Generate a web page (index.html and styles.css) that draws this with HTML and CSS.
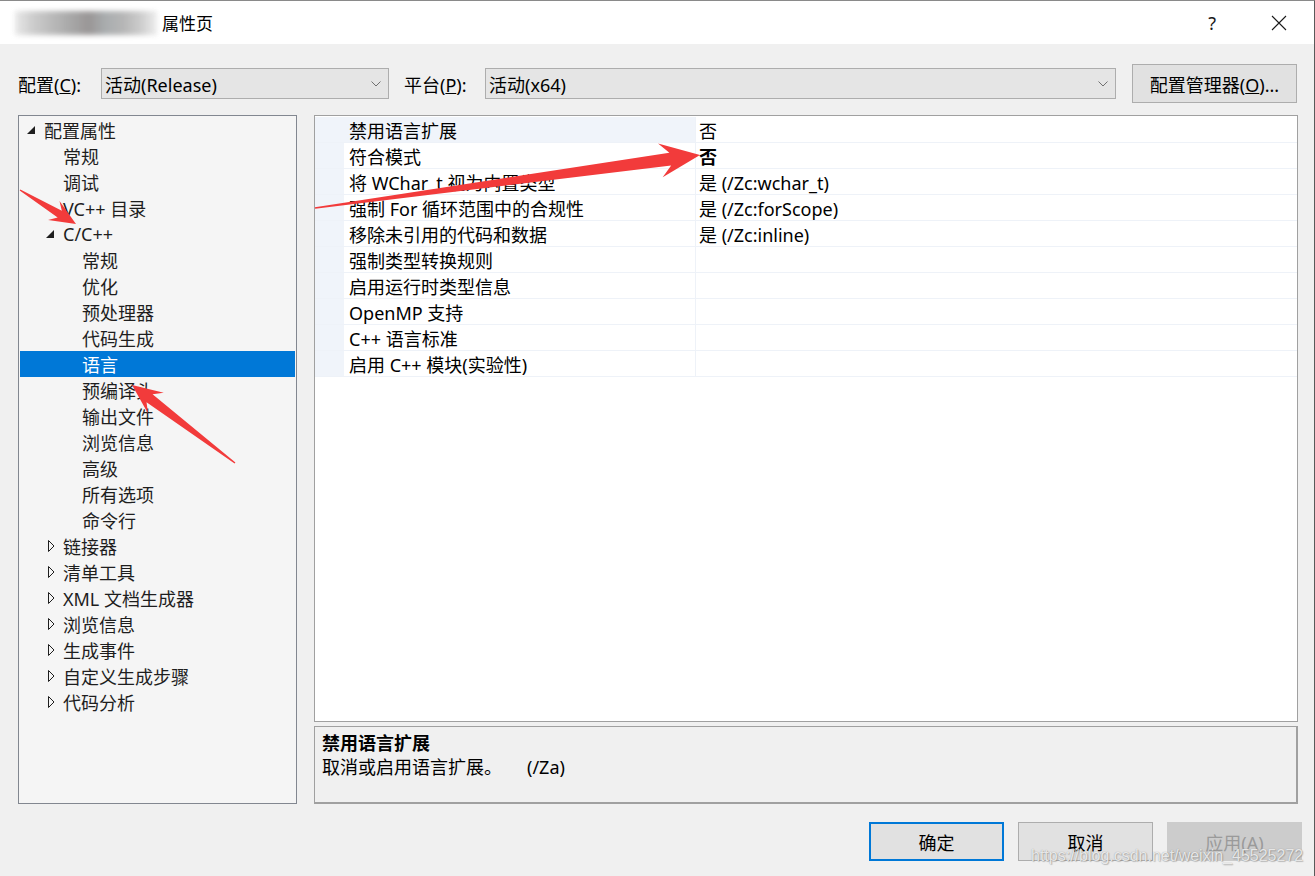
FILE: index.html
```html
<!DOCTYPE html>
<html lang="zh-CN">
<head>
<meta charset="utf-8">
<title>属性页</title>
<link rel="stylesheet" href="styles.css">
</head>
<body>
<div class="window">
  <div class="titlebar">
    <div class="blur"></div>
    <span class="title">属性页</span>
    <div class="title-btns">
      <span class="help">?</span>
      <span class="close"><svg width="16" height="16" viewBox="0 0 16 16"><path d="M1 1L15 15M15 1L1 15" stroke="#1a1a1a" stroke-width="1.1" fill="none"/></svg></span>
    </div>
  </div>

  <div class="config-row">
    <span class="lbl lbl-config">配置(<u>C</u>):</span>
    <div class="combo combo-config"><span>活动(Release)</span><svg class="chev" width="10" height="6" viewBox="0 0 10 6"><path d="M0.5 0.5L5 5L9.5 0.5" stroke="#707070" fill="none"/></svg></div>
    <span class="lbl lbl-platform">平台(<u>P</u>):</span>
    <div class="combo combo-platform"><span>活动(x64)</span><svg class="chev" width="10" height="6" viewBox="0 0 10 6"><path d="M0.5 0.5L5 5L9.5 0.5" stroke="#707070" fill="none"/></svg></div>
    <button class="btn btn-manager">配置管理器(<u>O</u>)...</button>
  </div>

  <div class="main">
    <div class="tree">
      <div class="trow lv0"><span class="tg"><svg width="8" height="8" viewBox="0 0 8 8"><path d="M8 0V8H0Z" fill="#1e1e1e"/></svg></span><span>配置属性</span></div>
      <div class="trow lv1"><span class="tg"></span><span>常规</span></div>
      <div class="trow lv1"><span class="tg"></span><span>调试</span></div>
      <div class="trow lv1"><span class="tg"></span><span>VC++ 目录</span></div>
      <div class="trow lv1"><span class="tg"><svg width="8" height="8" viewBox="0 0 8 8"><path d="M8 0V8H0Z" fill="#1e1e1e"/></svg></span><span>C/C++</span></div>
      <div class="trow lv2"><span class="tg"></span><span>常规</span></div>
      <div class="trow lv2"><span class="tg"></span><span>优化</span></div>
      <div class="trow lv2"><span class="tg"></span><span>预处理器</span></div>
      <div class="trow lv2"><span class="tg"></span><span>代码生成</span></div>
      <div class="trow lv2 selected"><span class="tg"></span><span>语言</span></div>
      <div class="trow lv2"><span class="tg"></span><span>预编译头</span></div>
      <div class="trow lv2"><span class="tg"></span><span>输出文件</span></div>
      <div class="trow lv2"><span class="tg"></span><span>浏览信息</span></div>
      <div class="trow lv2"><span class="tg"></span><span>高级</span></div>
      <div class="trow lv2"><span class="tg"></span><span>所有选项</span></div>
      <div class="trow lv2"><span class="tg"></span><span>命令行</span></div>
      <div class="trow lv1"><span class="tg col"><svg width="7" height="12" viewBox="0 0 7 12"><path d="M0.5 0.5L6 6L0.5 11.5Z" fill="none" stroke="#1e1e1e"/></svg></span><span>链接器</span></div>
      <div class="trow lv1"><span class="tg col"><svg width="7" height="12" viewBox="0 0 7 12"><path d="M0.5 0.5L6 6L0.5 11.5Z" fill="none" stroke="#1e1e1e"/></svg></span><span>清单工具</span></div>
      <div class="trow lv1"><span class="tg col"><svg width="7" height="12" viewBox="0 0 7 12"><path d="M0.5 0.5L6 6L0.5 11.5Z" fill="none" stroke="#1e1e1e"/></svg></span><span>XML 文档生成器</span></div>
      <div class="trow lv1"><span class="tg col"><svg width="7" height="12" viewBox="0 0 7 12"><path d="M0.5 0.5L6 6L0.5 11.5Z" fill="none" stroke="#1e1e1e"/></svg></span><span>浏览信息</span></div>
      <div class="trow lv1"><span class="tg col"><svg width="7" height="12" viewBox="0 0 7 12"><path d="M0.5 0.5L6 6L0.5 11.5Z" fill="none" stroke="#1e1e1e"/></svg></span><span>生成事件</span></div>
      <div class="trow lv1"><span class="tg col"><svg width="7" height="12" viewBox="0 0 7 12"><path d="M0.5 0.5L6 6L0.5 11.5Z" fill="none" stroke="#1e1e1e"/></svg></span><span>自定义生成步骤</span></div>
      <div class="trow lv1"><span class="tg col"><svg width="7" height="12" viewBox="0 0 7 12"><path d="M0.5 0.5L6 6L0.5 11.5Z" fill="none" stroke="#1e1e1e"/></svg></span><span>代码分析</span></div>
    </div>

    <div class="right">
      <div class="grid">
        <div class="grow active"><span class="gut"></span><span class="name">禁用语言扩展</span><span class="val">否</span></div>
        <div class="grow"><span class="gut"></span><span class="name">符合模式</span><span class="val bold">否</span></div>
        <div class="grow"><span class="gut"></span><span class="name">将 WChar_t 视为内置类型</span><span class="val">是 (/Zc:wchar_t)</span></div>
        <div class="grow"><span class="gut"></span><span class="name">强制 For 循环范围中的合规性</span><span class="val">是 (/Zc:forScope)</span></div>
        <div class="grow"><span class="gut"></span><span class="name">移除未引用的代码和数据</span><span class="val">是 (/Zc:inline)</span></div>
        <div class="grow"><span class="gut"></span><span class="name">强制类型转换规则</span><span class="val"></span></div>
        <div class="grow"><span class="gut"></span><span class="name">启用运行时类型信息</span><span class="val"></span></div>
        <div class="grow"><span class="gut"></span><span class="name">OpenMP 支持</span><span class="val"></span></div>
        <div class="grow"><span class="gut"></span><span class="name">C++ 语言标准</span><span class="val"></span></div>
        <div class="grow"><span class="gut"></span><span class="name">启用 C++ 模块(实验性)</span><span class="val"></span></div>
      </div>
      <div class="desc">
        <div class="desc-title">禁用语言扩展</div>
        <div class="desc-text">取消或启用语言扩展。<span class="flag">(/Za)</span></div>
      </div>
    </div>
  </div>

  <div class="buttons">
    <button class="btn dlg default">确定</button>
    <button class="btn dlg">取消</button>
    <button class="btn dlg disabled">应用(A)</button>
  </div>

  <div class="watermark">https://blog.csdn.net/weixin_45525272</div>

  <svg class="arrows" width="1315" height="876" viewBox="0 0 1315 876">
    <polygon points="315.11,207.79 671.17,164.53 662.69,176.30 700,154 658.05,142.62 669.39,151.65 314.89,206.21" fill="#f23b3b"/>
    <polygon points="19.69,189.51 57.68,216.56 48.07,218.91 76,223 59.49,200.11 61.84,209.72 20.31,188.49" fill="#f23b3b"/>
    <polygon points="235.42,461.44 152.56,393.29 163.77,391.75 132,384 148.07,412.47 146.52,401.27 234.58,462.56" fill="#f23b3b"/>
  </svg>
</div>
</body>
</html>
```

FILE: styles.css
```css
* { box-sizing: border-box; }

html, body {
  margin: 0;
  padding: 0;
  background: #f0f0f0;
}

body {
  font-family: "Noto Sans", "Noto Sans CJK SC", sans-serif;
  font-size: 18px;
  color: #000;
}

.window {
  position: relative;
  width: 1315px;
  height: 876px;
  background: #f0f0f0;
  border-top: 1px solid #8a8a8a;
  border-right: 1px solid #5a5a5a;
  overflow: hidden;
}

/* Title bar */
.titlebar {
  height: 43px;
  background: #fff;
  display: flex;
  align-items: center;
  position: relative;
}

.blur {
  width: 142px;
  height: 24px;
  margin-left: 15px;
  background: linear-gradient(90deg, #e6e6e6 0%, #c9c9c9 12%, #b4b4b4 25%, #9e9e9e 40%, #8f8b8b 52%, #a1a5a7 64%, #aeaeae 76%, #c6c6c6 88%, #ececec 100%);
  filter: blur(2.5px);
  opacity: 0.9;
}

.title {
  margin-left: 5px;
  font-size: 17px;
  color: #000;
}

.title-btns {
  margin-left: auto;
  display: flex;
  align-items: center;
  gap: 55px;
  padding-right: 27px;
}

.help {
  font-size: 18px;
  color: #1a1a1a;
  font-family: "Noto Sans", sans-serif;
}

.close {
  display: flex;
  width: 16px;
  height: 16px;
}

/* Config row */
.config-row {
  display: flex;
  align-items: center;
  height: 39px;
  margin-top: 20px;
  padding-left: 18px;
}

.lbl {
  white-space: nowrap;
}

.lbl-config { width: 83px; }
.lbl-platform { width: 81px; margin-left: 15px; }

.combo {
  height: 31px;
  background: #e5e5e5;
  border: 1px solid #adadad;
  display: flex;
  align-items: center;
  padding-left: 3px;
  padding-right: 7px;
}

.combo .chev { margin-left: auto; }

.combo-config { width: 288px; }
.combo-platform { width: 631px; }

.btn {
  font-family: "Noto Sans", "Noto Sans CJK SC", sans-serif;
  font-size: 18px;
  color: #000;
  background: #e1e1e1;
  border: 1px solid #adadad;
  padding: 0;
  height: 39px;
}

.btn-manager {
  width: 165px;
  margin-left: 16px;
}

/* Main area */
.main {
  display: flex;
  margin-top: 12px;
  padding-left: 18px;
  height: 689px;
  gap: 17px;
}

.tree {
  width: 279px;
  height: 689px;
  border: 1px solid #828790;
  background: #f5f5f5;
  padding: 1px;
  color: #1e1e1e;
}

.trow {
  height: 26px;
  display: flex;
  align-items: center;
  white-space: nowrap;
}

.trow.lv0 { padding-left: 7px; }
.trow.lv1 { padding-left: 26px; }
.trow.lv2 { padding-left: 45px; }

.tg {
  width: 17px;
  flex: none;
  display: flex;
  align-items: center;
}

.tg.col { padding-left: 2px; }

.trow.selected {
  background: #0078d7;
  color: #fff;
}

.right {
  width: 984px;
  display: flex;
  flex-direction: column;
  gap: 4px;
}

.grid {
  height: 607px;
  background: #fff;
  border: 1px solid #a0a0a0;
  padding-top: 1px;
}

.grow {
  display: flex;
  height: 26px;
  border-bottom: 1px solid #eef2f8;
}

.gut {
  width: 29px;
  flex: none;
  background: #f0f4fa;
}

.name {
  width: 352px;
  flex: none;
  padding-left: 5px;
  display: flex;
  align-items: center;
  border-right: 1px solid #eef2f8;
  white-space: nowrap;
}

.grow.active .name { background: #f0f4fa; }

.val {
  flex: 1;
  padding-left: 3px;
  display: flex;
  align-items: center;
  white-space: nowrap;
}

.val.bold { font-weight: 700; }

.desc {
  height: 78px;
  border: 1px solid #a0a0a0;
  border-right-width: 2px;
  border-bottom-width: 2px;
  background: #f0f0f0;
  padding: 4px 7px 0;
}

.desc-title {
  font-weight: 700;
  line-height: 24px;
  height: 24px;
}

.desc-text {
  line-height: 24px;
  height: 24px;
  white-space: nowrap;
}

.flag { margin-left: 25px; }

/* Bottom buttons */
.buttons {
  display: flex;
  justify-content: flex-end;
  gap: 14px;
  margin-top: 18px;
  padding-right: 12px;
}

.btn.dlg { width: 135px; }

.btn.default { border: 2px solid #0078d7; }

.btn.disabled {
  background: #cccccc;
  border-color: #cccccc;
  color: #9a9a9a;
}

.watermark {
  position: absolute;
  left: 1031px;
  top: 846px;
  font-family: "Liberation Sans", sans-serif;
  font-size: 16px;
  color: rgba(255, 255, 255, 0.8);
  text-shadow: 0 0 1px rgba(90, 90, 90, 0.6), 1px 1px 1px rgba(120, 120, 120, 0.4);
  white-space: nowrap;
}

.arrows {
  position: absolute;
  left: 0;
  top: 0;
  pointer-events: none;
}
```
